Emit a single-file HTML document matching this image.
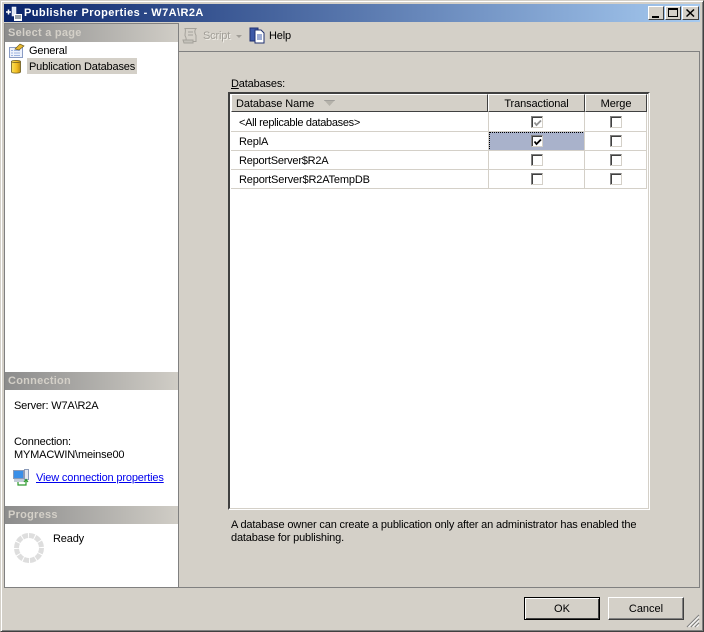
<!DOCTYPE html>
<html><head><meta charset="utf-8">
<style>
*{box-sizing:border-box}
html,body{margin:0;padding:0;width:704px;height:632px;overflow:hidden;background:#d4d0c8}
body{position:relative;font-family:"Liberation Sans",sans-serif;font-size:11px;color:#000}
.a{position:absolute}
.t{position:absolute;white-space:nowrap;line-height:13px;letter-spacing:-.16px}
.hd{position:absolute;left:5px;width:173px;height:18px;background:linear-gradient(90deg,#8c8c8c,#d0cdc6);color:#d4d0c8;font-weight:bold;font-size:11px;line-height:19px;padding-left:3px;letter-spacing:.25px}
.ch{position:absolute;top:94px;height:18px;background:#d4d0c8;border:1px solid;border-color:#fff #404040 #404040 #fff;text-align:center;line-height:18px;white-space:nowrap;letter-spacing:-.1px}
.hl{position:absolute;height:1px;background:#d4d0c8}
.vl{position:absolute;width:1px;background:#d4d0c8}
.cb{position:absolute;width:12px;height:12px;background:#fff;border:1px solid;border-color:#808080 #d4d0c8 #d4d0c8 #808080;box-shadow:inset 1px 1px 0 #404040}
.cb svg{position:absolute;left:1px;top:1px}
.btn{position:absolute;background:#d4d0c8;text-align:center;line-height:22px}
.wb{position:absolute;top:6px;width:16px;height:14px;background:#d4d0c8;border:1px solid;border-color:#fff #404040 #404040 #fff}
</style></head><body>
<!-- window frame -->
<div class="a" style="left:0;top:0;width:704px;height:632px;border:1px solid;border-color:#d4d0c8 #404040 #404040 #d4d0c8;box-shadow:inset 1px 1px 0 #fff,inset -1px -1px 0 #808080"></div>
<!-- title -->
<div class="a" style="left:4px;top:4px;width:696px;height:18px;background:linear-gradient(90deg,#0a246a,#a6caf0)"></div>
<svg class="a" style="left:5px;top:5px" width="18" height="17" viewBox="0 0 18 17">
<path d="M1 7h5M3.500 4.500v5" stroke="#fff" stroke-width="1.500" fill="none"/>
<rect x="7" y="2" width="4" height="9" fill="#dfe6f3" stroke="#fff" stroke-width=".5"/>
<rect x="9" y="9" width="8" height="7" fill="#fff"/><path d="M10 11h6M10 13h6" stroke="#345" stroke-width="1"/>
</svg>
<div class="t" style="left:24px;top:6px;color:#fff;font-weight:bold;font-size:11px;line-height:15px;letter-spacing:.43px">Publisher Properties - W7A\R2A</div>
<div class="wb" style="left:648px"><div class="a" style="left:3px;top:9px;width:7px;height:2px;background:#000"></div></div>
<div class="wb" style="left:665px"><div class="a" style="left:2px;top:1px;width:10px;height:9px;border:1px solid #000;border-top-width:2px"></div></div>
<div class="wb" style="left:682px;width:17px"><svg class="a" style="left:3px;top:2px" width="9" height="8"><path d="M0.500 0.500L8 7.500M8 0.500L0.500 7.500" stroke="#000" stroke-width="1.500"/></svg></div>
<!-- left panel -->
<div class="a" style="left:4px;top:23px;width:175px;height:565px;background:#fff;border:1px solid #808080"></div>
<div class="hd" style="top:24px">Select a page</div>
<svg class="a" style="left:8px;top:43px" width="17" height="15" viewBox="0 0 17 15">
<rect x="1.500" y="4.500" width="13" height="10" fill="#eef2fb" stroke="#8a9cc4"/>
<path d="M3 7.500h2M6 7.500h6M3 10h2M6 10h6M3 12.500h2M6 12.500h6" stroke="#9db4e0"/>
<path d="M7 6L12 1l4 2-5 4z" fill="#e8b830" stroke="#6b5a20" stroke-width=".7"/>
</svg>
<div class="t" style="left:29px;top:45px">General</div>
<div class="a" style="left:27px;top:58px;width:110px;height:16px;background:#d4d0c8"></div>
<svg class="a" style="left:10px;top:59px" width="12" height="15" viewBox="0 0 12 15">
<defs><linearGradient id="g" x1="0" x2="1"><stop offset="0" stop-color="#fbe25a"/><stop offset=".6" stop-color="#f2bc20"/><stop offset="1" stop-color="#b98a14"/></linearGradient></defs>
<path d="M1.500 2.500C1.500 1 10.500 1 10.500 2.500V13C10.500 14.500 1.500 14.500 1.500 13Z" fill="url(#g)" stroke="#6b5a20" stroke-width=".8"/>
<path d="M1.500 2.500C1.500 3.800 10.500 3.800 10.500 2.500" fill="none" stroke="#6b5a20" stroke-width=".8"/>
</svg>
<div class="t" style="left:29px;top:61px">Publication Databases</div>
<div class="hd" style="top:372px">Connection</div>
<div class="t" style="left:14px;top:400px">Server: W7A\R2A</div>
<div class="t" style="left:14px;top:436px">Connection:</div>
<div class="t" style="left:14px;top:449px">MYMACWIN\meinse00</div>
<svg class="a" style="left:13px;top:469px" width="17" height="17" viewBox="0 0 17 17">
<rect x="0.500" y="1.500" width="10" height="8" fill="#3a8fe8" stroke="#8a9ab8"/>
<rect x="11.500" y="0.500" width="4" height="10" fill="#e6e9ef" stroke="#8a9ab8"/>
<rect x="1" y="10" width="10" height="3" fill="#c5ccd8"/>
<path d="M5 13v3h8v-5M11 13l2-2.500 2 2.500" stroke="#2e9a2e" stroke-width="1.200" fill="none"/>
</svg>
<div class="t" style="left:36px;top:472px;color:#0000ee;text-decoration:underline">View connection properties</div>
<div class="hd" style="top:506px">Progress</div>
<svg class="a" style="left:14px;top:533px" width="30" height="30" viewBox="0 0 30 30">
<circle cx="15" cy="15" r="12.500" fill="none" stroke="#dedede" stroke-width="5" stroke-dasharray="5.500 1"/>
</svg>
<div class="t" style="left:53px;top:533px">Ready</div>
<!-- toolbar -->
<svg class="a" style="left:182px;top:27px" width="17" height="17" viewBox="0 0 17 17">
<path d="M3 1.500h11c-2 2-1 5 0 7v6H3c2-2 1-4 0-6 0-3 1-5 0-7z" fill="#d4d0c8" stroke="#a5a29b"/>
<path d="M1 13h10v3H2z" fill="#c4c1ba" stroke="#a5a29b"/>
<path d="M6 5h5M6 8h5" stroke="#a5a29b"/>
</svg>
<div class="t" style="left:203px;top:30px;color:#a19e97;text-shadow:1px 1px 0 #f0eee8">Script</div>
<div class="a" style="left:236px;top:35px;width:0;height:0;border:3px solid transparent;border-top:3px solid #a19e97;border-bottom:0"></div>
<svg class="a" style="left:249px;top:27px" width="17" height="17" viewBox="0 0 17 17">
<rect x="1" y="1" width="8" height="13" fill="#3c58a8" stroke="#1f3070"/>
<path d="M6 3h6l3 3v10H6z" fill="#fff" stroke="#1f3070"/>
<path d="M8 8h5M8 10h5M8 12h5" stroke="#3c58a8"/>
</svg>
<div class="t" style="left:269px;top:30px">Help</div>
<div class="a" style="left:179px;top:51px;width:521px;height:1px;background:#808080"></div>
<div class="a" style="left:699px;top:51px;width:1px;height:537px;background:#808080"></div>
<div class="a" style="left:179px;top:587px;width:521px;height:1px;background:#808080"></div>
<!-- grid -->
<div class="t" style="left:231px;top:78px"><u>D</u>atabases:</div>
<div class="a" style="left:228px;top:92px;width:422px;height:418px;background:#fff;border:2px solid;border-color:#404040 #fff #fff #404040"></div>
<div class="a" style="left:230px;top:508px;width:419px;height:1px;background:#d4d0c8"></div>
<div class="a" style="left:648px;top:94px;width:1px;height:415px;background:#d4d0c8"></div>
<div class="ch" style="left:231px;width:257px;text-align:left;padding-left:4px">Database Name</div>
<svg class="a" style="left:324px;top:100px" width="12" height="7"><path d="M0 0h11L5.500 6z" fill="#b5b2aa"/><path d="M0 0h11" stroke="#8a8a8a"/></svg>
<div class="ch" style="left:488px;width:97px">Transactional</div>
<div class="ch" style="left:585px;width:62px">Merge</div>
<div class="a" style="left:489px;top:132px;width:96px;height:19px;background:#a9b2cb;border:1px dotted #000"></div>
<div class="hl" style="left:231px;top:131px;width:416px"></div>
<div class="hl" style="left:231px;top:150px;width:416px"></div>
<div class="hl" style="left:231px;top:169px;width:416px"></div>
<div class="hl" style="left:231px;top:188px;width:416px"></div>
<div class="vl" style="left:488px;top:112px;height:77px"></div>
<div class="vl" style="left:584px;top:112px;height:77px"></div>
<div class="vl" style="left:646px;top:112px;height:77px"></div>
<div class="t" style="left:239px;top:117px;letter-spacing:-.31px">&lt;All replicable databases&gt;</div>
<div class="t" style="left:239px;top:136px">ReplA</div>
<div class="t" style="left:239px;top:155px;letter-spacing:-.22px">ReportServer$R2A</div>
<div class="t" style="left:239px;top:174px">ReportServer$R2ATempDB</div>
<div class="cb" style="left:531px;top:116px;background:#fff"><svg width="10" height="10"><path d="M1.500 4.500l2 2.500L8 2.500" stroke="#909090" stroke-width="1.800" fill="none"/></svg></div>
<div class="cb" style="left:531px;top:135px"><svg width="10" height="10"><path d="M1.500 4.500l2 2.500L8 2.500" stroke="#000" stroke-width="1.800" fill="none"/></svg></div>
<div class="cb" style="left:610px;top:116px"></div>
<div class="cb" style="left:531px;top:154px"></div>
<div class="cb" style="left:531px;top:173px"></div>
<div class="cb" style="left:610px;top:135px"></div>
<div class="cb" style="left:610px;top:154px"></div>
<div class="cb" style="left:610px;top:173px"></div>
<div class="t" style="left:231px;top:519px">A database owner can create a publication only after an administrator has enabled the</div>
<div class="t" style="left:231px;top:532px">database for publishing.</div>
<!-- buttons -->
<div class="btn" style="left:524px;top:597px;width:76px;height:23px;border:1px solid #000;box-shadow:inset 1px 1px 0 #fff,inset -1px -1px 0 #404040">OK</div>
<div class="btn" style="left:608px;top:597px;width:76px;height:23px;border:1px solid;border-color:#fff #404040 #404040 #fff;box-shadow:inset -1px -1px 0 #808080">Cancel</div>
<svg class="a" style="left:686px;top:614px" width="14" height="14"><path d="M13 1L1 13M13 5L5 13M13 9L9 13" stroke="#808080" stroke-width="1.200"/><path d="M13 2.500L2.500 13M13 6.500L6.500 13M13 10.500L10.500 13" stroke="#fff"/></svg>
</body></html>
